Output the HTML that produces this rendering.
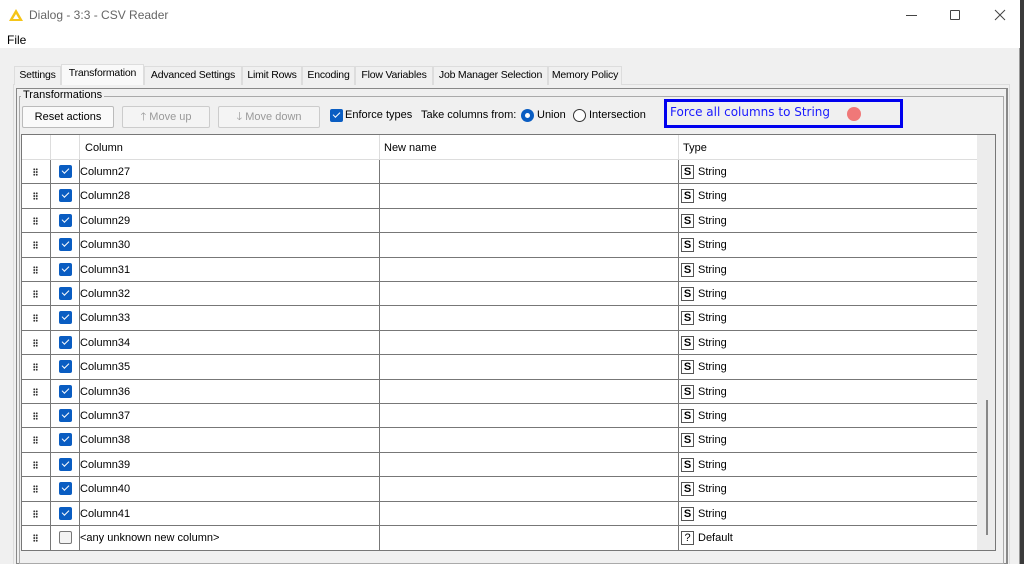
<!DOCTYPE html><html><head><meta charset="utf-8"><style>
*{box-sizing:border-box;margin:0;padding:0}
body{width:1024px;height:564px;overflow:hidden;background:#3a3a3a;font-family:"Liberation Sans",sans-serif;font-size:11px;color:#000;position:relative}
.a{position:absolute}
.win{left:0;top:0;width:1020px;height:564px;background:#f0f0f0;border-right:1px solid #999}
.btn{border:1px solid #ccc;background:#f4f4f4;height:22px;top:106px;text-align:center;line-height:20px;font-size:11px;border-radius:2px}
.cb{width:13px;height:13px;background:#0a5dc2;border-radius:2px}
.cb::after{content:"";position:absolute;left:3px;top:3px;width:6px;height:3px;border-left:1.3px solid #fff;border-bottom:1.3px solid #fff;transform:rotate(-45deg)}
.row{left:22px;width:955px;height:26px;background:#fff;border-top:1px solid #777}
.row div{position:absolute;top:0;height:24px}
.row .v{border-left:1px solid #777}
.row .grip{left:11px;top:8px;width:5px;height:8px;background:radial-gradient(circle,#333 0.8px,transparent 1.1px) 0 0/2.5px 2.7px}
.t{line-height:24px}
.row .sb{top:5px;width:13px;height:14px;border:1px solid #555;font-weight:bold;font-size:11px;text-align:center;line-height:12px}
.row .cb{left:37px;top:5px;height:13px}
.tab{top:66px;height:19px;border:1px solid #ddd;border-bottom:none;background:#f0f0f0;line-height:17px;font-size:10.5px;text-align:center;white-space:nowrap;letter-spacing:-0.2px}
</style></head><body>
<div class="a win"></div>
<div class="a" style="left:0;top:0;width:1020px;height:48px;background:#fff"></div>
<svg class="a" style="left:8px;top:8px" width="16" height="14"><polygon points="8,1 15,13 1,13" fill="#f5c518"/><polygon points="8,6 11,11 5,11" fill="#fff"/></svg>
<div class="a" style="left:29px;top:8px;font-size:12px;color:#666">Dialog - 3:3 - CSV Reader</div>
<div class="a" style="left:906px;top:15px;width:11px;height:1px;background:#444"></div>
<div class="a" style="left:950px;top:10px;width:10px;height:10px;border:1px solid #444;border-radius:1px"></div>
<svg class="a" style="left:994px;top:9px" width="12" height="12"><path d="M1 1L11 11M11 1L1 11" stroke="#444" stroke-width="1"/></svg>
<div class="a" style="left:7px;top:33px;font-size:12px">File</div>
<div class="a" style="left:13px;top:84px;width:997px;height:480px;border:1px solid #ddd;border-bottom:none"></div>
<div class="a tab" style="left:14px;width:47px">Settings</div>
<div class="a tab" style="left:61px;width:83px;top:64px;height:21px;background:#f9f9f9;z-index:2">Transformation</div>
<div class="a tab" style="left:144px;width:98px">Advanced Settings</div>
<div class="a tab" style="left:242px;width:60px">Limit Rows</div>
<div class="a tab" style="left:302px;width:53px">Encoding</div>
<div class="a tab" style="left:355px;width:78px">Flow Variables</div>
<div class="a tab" style="left:433px;width:115px">Job Manager Selection</div>
<div class="a tab" style="left:548px;width:74px">Memory Policy</div>
<div class="a" style="left:16px;top:88px;width:992px;height:476px;border:1px solid #888;border-right:2px solid #888"></div>
<div class="a" style="left:19px;top:96px;width:985px;height:468px;border:1px solid #aaa"></div>
<div class="a" style="left:21px;top:89px;background:#f0f0f0;padding:0 2px;font-size:11px">Transformations</div>
<div class="a btn" style="left:22px;width:92px;background:#fafafa;border-color:#bbb">Reset actions</div>
<div class="a btn" style="left:122px;width:88px;color:#999">🡑 Move up</div>
<div class="a btn" style="left:218px;width:102px;color:#999">🡓 Move down</div>
<div class="a cb" style="left:330px;top:109px"></div>
<div class="a" style="left:345px;top:109px">Enforce types</div>
<div class="a" style="left:421px;top:109px">Take columns from:</div>
<div class="a" style="left:521px;top:109px;width:13px;height:13px;border-radius:50%;background:#0a5dc2"><div class="a" style="left:4px;top:4px;width:5px;height:5px;border-radius:50%;background:#fff"></div></div>
<div class="a" style="left:537px;top:109px">Union</div>
<div class="a" style="left:573px;top:109px;width:13px;height:13px;border-radius:50%;border:1px solid #333;background:#fff"></div>
<div class="a" style="left:589px;top:109px">Intersection</div>
<div class="a" style="left:664px;top:99px;width:239px;height:29px;border:3px solid #0000ee"></div>
<div class="a" style="left:670px;top:105px;color:#1a1aff;font-family:'DejaVu Sans',sans-serif;font-size:12px">Force all columns to String</div>
<div class="a" style="left:847px;top:107px;width:14px;height:14px;border-radius:50%;background:#f07878"></div>
<div class="a" style="left:21px;top:134px;width:975px;height:417px;border:1px solid #777;background:#ececec"></div>
<div class="a" style="left:22px;top:135px;width:955px;height:24px;background:#fff"></div>
<div class="a" style="left:50px;top:135px;width:1px;height:24px;background:#ddd"></div>
<div class="a" style="left:79px;top:135px;width:1px;height:24px;background:#ddd"></div>
<div class="a" style="left:379px;top:135px;width:1px;height:24px;background:#ddd"></div>
<div class="a" style="left:678px;top:135px;width:1px;height:24px;background:#ddd"></div>
<div class="a" style="left:85px;top:142px">Column</div>
<div class="a" style="left:384px;top:142px">New name</div>
<div class="a" style="left:683px;top:142px">Type</div>
<div class="a" style="left:986px;top:400px;width:2px;height:135px;background:#888"></div>
<div class="a row" style="top:159px;border-top-color:#ddd"><div class="grip"></div><div class="v" style="left:28px;width:1px"></div><div class="cb"></div><div class="v t" style="left:57px;width:300px">Column27</div><div class="v" style="left:357px"></div><div class="v" style="left:656px"></div><div class="sb" style="left:659px">S</div><div class="t" style="left:676px">String</div></div>
<div class="a row" style="top:183px"><div class="grip"></div><div class="v" style="left:28px;width:1px"></div><div class="cb"></div><div class="v t" style="left:57px;width:300px">Column28</div><div class="v" style="left:357px"></div><div class="v" style="left:656px"></div><div class="sb" style="left:659px">S</div><div class="t" style="left:676px">String</div></div>
<div class="a row" style="top:208px"><div class="grip"></div><div class="v" style="left:28px;width:1px"></div><div class="cb"></div><div class="v t" style="left:57px;width:300px">Column29</div><div class="v" style="left:357px"></div><div class="v" style="left:656px"></div><div class="sb" style="left:659px">S</div><div class="t" style="left:676px">String</div></div>
<div class="a row" style="top:232px"><div class="grip"></div><div class="v" style="left:28px;width:1px"></div><div class="cb"></div><div class="v t" style="left:57px;width:300px">Column30</div><div class="v" style="left:357px"></div><div class="v" style="left:656px"></div><div class="sb" style="left:659px">S</div><div class="t" style="left:676px">String</div></div>
<div class="a row" style="top:257px"><div class="grip"></div><div class="v" style="left:28px;width:1px"></div><div class="cb"></div><div class="v t" style="left:57px;width:300px">Column31</div><div class="v" style="left:357px"></div><div class="v" style="left:656px"></div><div class="sb" style="left:659px">S</div><div class="t" style="left:676px">String</div></div>
<div class="a row" style="top:281px"><div class="grip"></div><div class="v" style="left:28px;width:1px"></div><div class="cb"></div><div class="v t" style="left:57px;width:300px">Column32</div><div class="v" style="left:357px"></div><div class="v" style="left:656px"></div><div class="sb" style="left:659px">S</div><div class="t" style="left:676px">String</div></div>
<div class="a row" style="top:305px"><div class="grip"></div><div class="v" style="left:28px;width:1px"></div><div class="cb"></div><div class="v t" style="left:57px;width:300px">Column33</div><div class="v" style="left:357px"></div><div class="v" style="left:656px"></div><div class="sb" style="left:659px">S</div><div class="t" style="left:676px">String</div></div>
<div class="a row" style="top:330px"><div class="grip"></div><div class="v" style="left:28px;width:1px"></div><div class="cb"></div><div class="v t" style="left:57px;width:300px">Column34</div><div class="v" style="left:357px"></div><div class="v" style="left:656px"></div><div class="sb" style="left:659px">S</div><div class="t" style="left:676px">String</div></div>
<div class="a row" style="top:354px"><div class="grip"></div><div class="v" style="left:28px;width:1px"></div><div class="cb"></div><div class="v t" style="left:57px;width:300px">Column35</div><div class="v" style="left:357px"></div><div class="v" style="left:656px"></div><div class="sb" style="left:659px">S</div><div class="t" style="left:676px">String</div></div>
<div class="a row" style="top:379px"><div class="grip"></div><div class="v" style="left:28px;width:1px"></div><div class="cb"></div><div class="v t" style="left:57px;width:300px">Column36</div><div class="v" style="left:357px"></div><div class="v" style="left:656px"></div><div class="sb" style="left:659px">S</div><div class="t" style="left:676px">String</div></div>
<div class="a row" style="top:403px"><div class="grip"></div><div class="v" style="left:28px;width:1px"></div><div class="cb"></div><div class="v t" style="left:57px;width:300px">Column37</div><div class="v" style="left:357px"></div><div class="v" style="left:656px"></div><div class="sb" style="left:659px">S</div><div class="t" style="left:676px">String</div></div>
<div class="a row" style="top:427px"><div class="grip"></div><div class="v" style="left:28px;width:1px"></div><div class="cb"></div><div class="v t" style="left:57px;width:300px">Column38</div><div class="v" style="left:357px"></div><div class="v" style="left:656px"></div><div class="sb" style="left:659px">S</div><div class="t" style="left:676px">String</div></div>
<div class="a row" style="top:452px"><div class="grip"></div><div class="v" style="left:28px;width:1px"></div><div class="cb"></div><div class="v t" style="left:57px;width:300px">Column39</div><div class="v" style="left:357px"></div><div class="v" style="left:656px"></div><div class="sb" style="left:659px">S</div><div class="t" style="left:676px">String</div></div>
<div class="a row" style="top:476px"><div class="grip"></div><div class="v" style="left:28px;width:1px"></div><div class="cb"></div><div class="v t" style="left:57px;width:300px">Column40</div><div class="v" style="left:357px"></div><div class="v" style="left:656px"></div><div class="sb" style="left:659px">S</div><div class="t" style="left:676px">String</div></div>
<div class="a row" style="top:501px"><div class="grip"></div><div class="v" style="left:28px;width:1px"></div><div class="cb"></div><div class="v t" style="left:57px;width:300px">Column41</div><div class="v" style="left:357px"></div><div class="v" style="left:656px"></div><div class="sb" style="left:659px">S</div><div class="t" style="left:676px">String</div></div>
<div class="a row" style="top:525px;height:25px"><div class="grip"></div><div class="v" style="left:28px;width:1px"></div><div style="left:37px;top:5px;height:13px;width:13px;border:1px solid #777;border-radius:2px;background:#f4f4f4"></div><div class="v t" style="left:57px;width:300px">&lt;any unknown new column&gt;</div><div class="v" style="left:357px"></div><div class="v" style="left:656px"></div><div class="sb" style="left:659px;font-weight:normal">?</div><div class="t" style="left:676px">Default</div></div>
</body></html>
